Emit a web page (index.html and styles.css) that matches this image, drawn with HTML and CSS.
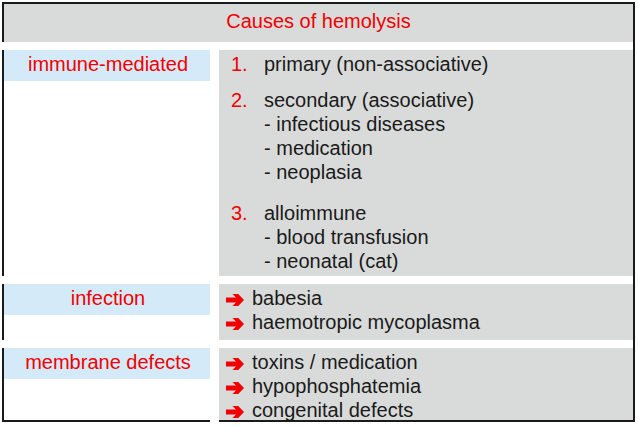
FILE: index.html
```html
<!DOCTYPE html>
<html lang="en">
<head>
<meta charset="utf-8">
<title>Causes of hemolysis</title>
<link rel="stylesheet" href="styles.css">
</head>
<body>
<div class="frame">
  <div class="header">Causes of hemolysis</div>

  <div class="row r1">
    <div class="left"><div class="label">immune-mediated</div></div>
    <div class="right numbered">
      <div class="item">
        <span class="num">1.</span>
        <div class="lines"><div>primary (non-associative)</div></div>
      </div>
      <div class="item i2">
        <span class="num">2.</span>
        <div class="lines">
          <div>secondary (associative)</div>
          <div>- infectious diseases</div>
          <div>- medication</div>
          <div>- neoplasia</div>
        </div>
      </div>
      <div class="item i3">
        <span class="num">3.</span>
        <div class="lines">
          <div>alloimmune</div>
          <div>- blood transfusion</div>
          <div>- neonatal (cat)</div>
        </div>
      </div>
    </div>
  </div>

  <div class="row r2">
    <div class="left"><div class="label">infection</div></div>
    <div class="right arrows">
      <div class="ai"><svg class="arrow" viewBox="0 0 18 12" width="18" height="12"><polygon points="0,3.6 10,3.6 6.4,0 12.2,0 18,6 12.2,12 6.4,12 10,8.4 0,8.4"/></svg>babesia</div>
      <div class="ai"><svg class="arrow" viewBox="0 0 18 12" width="18" height="12"><polygon points="0,3.6 10,3.6 6.4,0 12.2,0 18,6 12.2,12 6.4,12 10,8.4 0,8.4"/></svg>haemotropic mycoplasma</div>
    </div>
  </div>

  <div class="row r3">
    <div class="left"><div class="label">membrane defects</div></div>
    <div class="right arrows">
      <div class="ai"><svg class="arrow" viewBox="0 0 18 12" width="18" height="12"><polygon points="0,3.6 10,3.6 6.4,0 12.2,0 18,6 12.2,12 6.4,12 10,8.4 0,8.4"/></svg>toxins / medication</div>
      <div class="ai"><svg class="arrow" viewBox="0 0 18 12" width="18" height="12"><polygon points="0,3.6 10,3.6 6.4,0 12.2,0 18,6 12.2,12 6.4,12 10,8.4 0,8.4"/></svg>hypophosphatemia</div>
      <div class="ai"><svg class="arrow" viewBox="0 0 18 12" width="18" height="12"><polygon points="0,3.6 10,3.6 6.4,0 12.2,0 18,6 12.2,12 6.4,12 10,8.4 0,8.4"/></svg>congenital defects</div>
    </div>
  </div>
</div>
</body>
</html>
```

FILE: styles.css
```css
html, body {
  margin: 0;
  padding: 0;
  background: #ffffff;
}

body {
  font-family: "Liberation Sans", Arial, sans-serif;
  font-size: 20px;
  line-height: 24px;
  color: #1a1a1a;
}

.frame {
  box-sizing: border-box;
  width: 633px;
  margin: 2px 0 0 2px;
  border-top: 2px solid #1a1a1a;
  border-right: 2px solid #1a1a1a;
  display: flex;
  flex-direction: column;
  gap: 8px;
}

.header {
  box-sizing: border-box;
  height: 38px;
  border-left: 2px solid #1a1a1a;
  background: #d9dada;
  color: #f00000;
  text-align: center;
  padding-top: 5px;
}

.row {
  display: grid;
  grid-template-columns: 208px 414px;
  column-gap: 9px;
}

.r1 { height: 226px; }
.r2 { height: 56px; }
.r3 { height: 74px; }

.left {
  box-sizing: border-box;
  border-left: 2px solid #1a1a1a;
  background: #ffffff;
}

.label {
  box-sizing: border-box;
  height: 31px;
  padding-top: 2px;
  padding-left: 2px;
  background: #d4eaf8;
  color: #f00000;
  text-align: center;
}

.right {
  box-sizing: border-box;
  background: #d9dada;
  padding-top: 2px;
  overflow: hidden;
}

.r3 .left,
.r3 .right {
  border-bottom: 2px solid #1a1a1a;
}

.numbered {
  padding-left: 12px;
}

.item {
  display: flex;
}

.i2 { margin-top: 12px; }
.i3 { margin-top: 17px; }

.num {
  width: 33px;
  flex: none;
  color: #f00000;
}

.arrows {
  padding-left: 7px;
}

.arrow {
  fill: #f00000;
  margin-right: 8px;
  vertical-align: -1px;
}
```
